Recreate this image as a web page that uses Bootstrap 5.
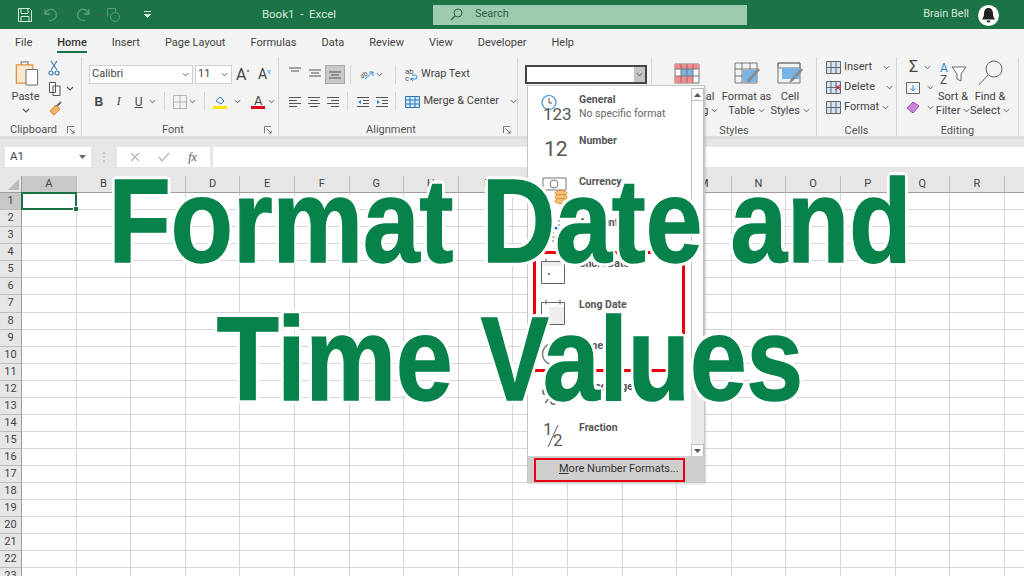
<!DOCTYPE html>
<html lang="en">
<head>
  <meta charset="UTF-8">
  <meta name="viewport" content="width=device-width, initial-scale=1.0">
  <link href="https://cdn.jsdelivr.net/npm/bootstrap@5.3.0/dist/css/bootstrap.min.css" rel="stylesheet">
  <title>Format Date and Time Values</title>
  <style>
    html, body { height: 100%; overflow: hidden; }
    body { font-family: Roboto, "Noto Sans", sans-serif; font-size: 11px; color: #444; background: #e6e6e6; position: relative; white-space: nowrap; }
    svg { display: block; flex: none; }
    svg.d-inline { display: inline; vertical-align: 1px; }
    .ml3 { margin-left: 3px; } .ml5 { margin-left: 5px; } .ml8 { margin-left: 8px; } .ml10 { margin-left: 10px; } .ml12 { margin-left: 12px; }

    .title-bar { height: 29px; background: #1b7346; color: #d5e8dc; }
    .qat { width: 232px; padding-left: 17px; }
    .doc-name { width: 134px; font-size: 11.5px; text-align: center; }
    .search-box { width: 314px; height: 20px; margin-left: 67px; background: #9dcbaf; color: #2f5f45; padding-left: 17px; gap: 12px; font-size: 11px; }
    .user-name { margin-left: auto; font-size: 11px; margin-right: 9px; }
    .avatar { margin-right: 25px; margin-top: 1px; }

    .tab-bar { height: 28px; background: #f3f3f3; padding-left: 15px; gap: 25px; font-size: 11px; line-height: 27px; }
    .tab-on { border-bottom: 2px solid #1b7346; height: 24px; color: #333; font-weight: 500; }

    .ribbon { height: 79px; background: #f3f3f3; }
    .rb-group { border-right: 1px solid #d4d4d4; height: 79px; }
    .rb-body { flex: 1 1 auto; padding-top: 3px; }
    .rb-label { height: 17px; padding-top: 4px; line-height: 15px; text-align: center; color: #555; font-size: 11px; }
    .launch { width: 14px; }
    .g-clip { width: 82px; }
    .g-font { width: 197px; }
    .g-align { width: 239px; }
    .g-num { width: 134px; }
    .g-style { width: 165px; }
    .g-cells { width: 80px; }
    .g-edit { width: 122px; }
    .g-clip .rb-body, .g-font .rb-body, .g-num .rb-body { padding-left: 7px; }
    .g-align .rb-body { padding-left: 6px; }
    .g-style .rb-body { padding-left: 3px; }
    .g-cells .rb-body, .g-edit .rb-body { padding-left: 9px; }
    .g-clip .rb-body { padding-top: 1px; }
    .g-cells .rb-body, .g-edit .small-stack { margin-top: -3px; }

    .tall { line-height: 14px; text-align: center; font-size: 11px; color: #444; }
    .tall svg { margin-bottom: 4px; }
    .tall svg.d-inline, .tall svg.mt-1 { margin-bottom: 0; }
    .g-clip .tall { margin-top: 1px; }
    .w37 { width: 37px; } .w63 { width: 63px; } .w49 { width: 49px; } .w38 { width: 38px; } .w36 { width: 36px; } .w29 { width: 29px; }
    .combo { height: 19px; background: #fff; border: 1px solid #d0d0d0; padding: 0 3px 0 2px; font-size: 11px; }
    .combo-font { width: 104px; }
    .combo-size { width: 37px; margin-left: 2px; }
    .grow-a { font-size: 16px; line-height: 19px; margin-left: 4px; width: 20px; }
    .grow-a sup { font-size: 7px; top: -.7em; }
    .shrink-a { font-size: 14px; margin-left: 2px; }
    .shrink-a sup { color: #2b88d8; }
    .rows-top { padding-top: 8px; }
    .tool-row { height: 19px; }
    .tool-row + .tool-row { margin-top: 8px; }
    .cell20 { width: 20px; height: 19px; }
    .cell10 { width: 10px; height: 19px; }
    .lines-top { padding-top: 2px; }
    .vsep { width: 1px; height: 19px; background: #d4d4d4; margin: 0 5px; }
    .vsep-wide { margin-left: 9px; }
    .vsep-mid { margin-left: 4px; }
    .pressed { background: #c9c9c9; border: 1px solid #a8a8a8; }
    .fmt-b { font: bold 12px "Liberation Sans", sans-serif; }
    .fmt-i { font: italic 12px "Liberation Serif", serif; }
    .fmt-u { font: 12px Roboto, sans-serif; text-decoration: underline; }
    .swatch { display: block; width: 14px; height: 3px; }
    .swatch-y { background: #ffe600; }
    .swatch-r { background: #e4001b; }
    .font-a { line-height: 11px; font-size: 13px; }
    .num-combo { width: 122px; height: 19px; background: #fff; border: 2px solid #444; }
    .num-arrow { width: 11px; background: #c4c4c4; margin-left: auto; }
    .small-row { height: 20px; gap: 3px; }
    .sigma { font-size: 16px; width: 15px; text-align: center; }
    .wrap-gap { gap: 3px; }

    .formula-bar { height: 40px; background: #e6e6e6; border-top: 3px solid #dcdcdc; padding: 8px 0 9px 5px; }
    .name-box { width: 86px; height: 20px; background: #fff; padding: 0 5px; font-size: 11.5px; }
    .grip { width: 26px; }
    .fx-box { width: 93px; height: 20px; background: #fff; margin-right: 3px; }
    .formula-input { flex: 1 1 auto; height: 20px; background: #fff; }
    .fx-mark { font: italic 12px "Liberation Serif", serif; color: #555; }

    .sheet { display: grid; grid-template-columns: 22px repeat(19, 54.6px); grid-auto-rows: 17.07px; background: #fff; }
    .sheet > div { border-right: 1px solid #d6d6d6; border-bottom: 1px solid #d6d6d6; }
    .sheet > .hd { background: #e6e6e6; border-color: #bdbdbd; text-align: center; color: #444; font-size: 11px; line-height: 16px; }
    .sheet > .hd-row { border-right-color: #9c9c9c; }
    .sheet > .hd-col { border-bottom-color: #9c9c9c; }
    .sheet > .hd-on { background: #c8c8c8; }
    .sheet > .a1 { position: relative; border: 2px solid #1b7346; margin: -1px 0 0 -1px; }
    .a1::after { content: ""; position: absolute; right: -4px; bottom: -4px; width: 6px; height: 6px; background: #1b7346; border: 1px solid #fff; }
    .corner { display: flex; align-items: flex-end; justify-content: flex-end; padding: 0 2px 2px 0; }

    .fmt-menu { position: absolute; left: 527px; top: 85px; width: 178px; height: 398px; background: #fff; border: 1px solid #c6c6c6; border-radius: 0; padding: 0; box-shadow: 1px 1px 2px rgba(0,0,0,.15); margin: 0; z-index: 1; font-size: 11px; color: #444; }
    .fmt-item { height: 41px; padding: 5px 0 0 7px; gap: 8px; }
    .fmt-text { padding-top: 2px; line-height: 14px; font-size: 10.5px; color: #666; }
    .fmt-text b { display: block; color: #555; }
    .fmt-scroll { position: absolute; left: 163px; top: 2px; width: 13px; height: 369px; background: #e9e9e9; }
    .scroll-btn { width: 13px; height: 13px; border: 1px solid #bdbdbd; background: #fff; }
    .scroll-thumb { height: 276px; background: #fff; border: 1px solid #bdbdbd; border-top: 0; }
    .scroll-track { height: 67px; }
    .fmt-foot { position: absolute; left: 0; right: 0; bottom: 0; height: 26px; background: #cfcfcf; padding-left: 31px; line-height: 25px; color: #333; }
    .red-foot { position: absolute; left: 534px; top: 458px; width: 151px; height: 24px; border: 2px solid #e8000f; z-index: 2; }
    .red-range { position: absolute; left: 533px; top: 251px; width: 152px; height: 121px; border: 3px solid #e8000f; z-index: 2; }

    .headline { position: absolute; left: 0; top: 152px; width: 1020px; z-index: 3; text-align: center; font: bold 119px/138px "Liberation Sans", sans-serif; color: #07824a; -webkit-text-stroke: 1.5px #07824a; text-shadow: 4px 0 #fff, -4px 0 #fff, 0 4px #fff, 0 -4px #fff, 3px 3px #fff, -3px 3px #fff, 3px -3px #fff, -3px -3px #fff; transform: scaleX(.855); transform-origin: 50% 50%; }
  </style>
</head>
<body>
  <svg width="0" height="0" class="position-absolute">
    <symbol id="chev" viewBox="0 0 8 5"><path d="M1 1l3 3 3-3" fill="none" stroke="#555" stroke-width="1.1"/></symbol>
    <symbol id="launch" viewBox="0 0 9 9"><path d="M.5 8V.5H8M3 3l5 5M8 5v3H5" fill="none" stroke="#666"/></symbol>
    <symbol id="al-l" viewBox="0 0 14 12"><path d="M1 1.500h12M1 4.500h8M1 7.500h12M1 10.500h8" stroke="#555"/></symbol>
    <symbol id="al-c" viewBox="0 0 14 12"><path d="M1 1.500h12M3 4.500h8M1 7.500h12M3 10.500h8" stroke="#555"/></symbol>
    <symbol id="al-r" viewBox="0 0 14 12"><path d="M1 1.500h12M5 4.500h8M1 7.500h12M5 10.500h8" stroke="#555"/></symbol>
  </svg>

  <div class="title-bar d-flex align-items-center">
    <div class="qat d-flex align-items-center">
      <svg width="16" height="16" viewBox="0 0 16 16" fill="none" stroke="#d5e8dc"><path d="M1.500 1.500h11l2 2v11h-13zM4 1.500v5h7v-5M4 14.500v-5h8v5"/></svg>
      <svg class="ml10" width="15" height="15" viewBox="0 0 15 15" fill="none" stroke="#5c9d7b" stroke-width="1.300"><path d="M2 2v5h5M2.500 7A5.500 5.500 0 1 1 6 13"/></svg>
      <svg class="ml3" width="7" height="5"><use href="#chev"/></svg>
      <svg class="ml8" width="15" height="15" viewBox="0 0 15 15" fill="none" stroke="#5c9d7b" stroke-width="1.300"><path d="M13 2v5H8M12.500 7A5.500 5.500 0 1 0 9 13"/></svg>
      <svg class="ml3" width="7" height="5"><use href="#chev"/></svg>
      <svg class="ml5" width="15" height="15" viewBox="0 0 15 15" fill="none" stroke="#5c9d7b"><path d="M1.500 9.500v-8h8v3"/><circle cx="9" cy="10" r="4.500"/></svg>
      <svg class="ml3" width="7" height="5"><use href="#chev"/></svg>
      <svg class="ml12" width="9" height="9" viewBox="0 0 9 9" fill="none" stroke="#d5e8dc"><path d="M1 1.500h7"/><path d="M1 4l3.500 3.500L8 4" fill="#d5e8dc"/></svg>
    </div>
    <div class="doc-name">Book1&nbsp; - &nbsp;Excel</div>
    <div class="search-box d-flex align-items-center">
      <svg width="13" height="13" viewBox="0 0 13 13" fill="none" stroke="#2f5f45"><circle cx="8" cy="5" r="4"/><path d="M5 8l-4 4" stroke-width="1.300"/></svg>
      <span>Search</span>
    </div>
    <div class="user-name">Brain Bell</div>
    <svg class="avatar" width="21" height="21" viewBox="0 0 21 21"><circle cx="10.500" cy="10.500" r="10.500" fill="#fff"/><path d="M10.500 3c-3 0-4.500 2.500-4.500 5.500 0 3-1 4.500-2 6h13c-1-1.500-2-3-2-6C15 5.500 13.500 3 10.500 3zM8.500 15.500a2 2 0 0 0 4 0z" fill="#222"/></svg>
  </div>

  <div class="tab-bar d-flex">
    <span>File</span><span class="tab-on">Home</span><span>Insert</span><span>Page Layout</span><span>Formulas</span><span>Data</span><span>Review</span><span>View</span><span>Developer</span><span>Help</span>
  </div>

  <div class="ribbon d-flex">
    <section class="rb-group g-clip d-flex flex-column">
      <div class="rb-body d-flex">
        <div class="tall w37 d-flex flex-column align-items-center">
          <svg width="26" height="27" viewBox="0 0 26 28" fill="none"><path d="M3 6h17v19H3z" fill="#fbe8d0" stroke="#e2913c" stroke-width="1.300"/><path d="M8 6V3h7v3" stroke="#8a8a8a" stroke-width="1.300"/><path d="M13 11h12v16H13z" fill="#fff" stroke="#666"/></svg>
          Paste
          <svg class="mt-1" width="8" height="5"><use href="#chev"/></svg>
        </div>
        <div class="d-flex flex-column ms-1">
          <div class="small-row d-flex align-items-center"><svg width="12" height="16" viewBox="0 0 12 16" fill="none" stroke="#3f7fb8" stroke-width="1.200"><path d="M3 1l6 9M9 1L3 10"/><circle cx="3" cy="13" r="2"/><circle cx="9" cy="13" r="2"/></svg></div>
          <div class="small-row d-flex align-items-center"><svg width="15" height="15" viewBox="0 0 15 15" fill="none" stroke="#555"><path d="M1.500 1.500h6v10h-6zM5 5h7v9.500H5z" fill="#fff"/></svg><svg width="8" height="5"><use href="#chev"/></svg></div>
          <div class="small-row d-flex align-items-center"><svg width="15" height="15" viewBox="0 0 15 15" fill="none"><path d="M2 10l6-6 4 4-6 6z" fill="#f2b36a" stroke="#d98425"/><path d="M9 5l4-4" stroke="#666" stroke-width="2"/></svg></div>
        </div>
      </div>
      <div class="rb-label d-flex align-items-center"><span class="flex-grow-1">Clipboard</span><span class="launch"><svg width="8" height="8"><use href="#launch"/></svg></span></div>
    </section>

    <section class="rb-group g-font d-flex flex-column">
      <div class="rb-body rows-top">
        <div class="tool-row d-flex align-items-center">
          <div class="combo combo-font d-flex align-items-center justify-content-between"><span>Calibri</span><svg width="7" height="5"><use href="#chev"/></svg></div>
          <div class="combo combo-size d-flex align-items-center justify-content-between"><span>11</span><svg width="7" height="5"><use href="#chev"/></svg></div>
          <span class="grow-a">A<sup>^</sup></span>
          <span class="grow-a shrink-a">A<sup>v</sup></span>
        </div>
        <div class="tool-row d-flex align-items-center">
          <div class="cell20 d-flex align-items-center justify-content-center fmt-b">B</div>
          <div class="cell20 d-flex align-items-center justify-content-center fmt-i">I</div>
          <div class="cell20 d-flex align-items-center justify-content-center fmt-u">U</div>
          <div class="cell10 d-flex align-items-center"><svg width="7" height="5"><use href="#chev"/></svg></div>
          <div class="vsep"></div>
          <div class="cell20 d-flex align-items-center justify-content-center"><svg width="14" height="14" viewBox="0 0 14 14" fill="none" stroke="#777" stroke-dasharray="1 1"><path d="M.5.500h13v13H.500zM7 .5v13M.5 7h13"/></svg></div>
          <div class="cell10 d-flex align-items-center"><svg width="7" height="5"><use href="#chev"/></svg></div>
          <div class="vsep"></div>
          <div class="cell20 d-flex flex-column align-items-center justify-content-center"><svg width="13" height="11" viewBox="0 0 13 11" fill="none" stroke="#3f7fb8"><path d="M2 6l4-4 4 4-3 3z"/></svg><span class="swatch swatch-y"></span></div>
          <div class="cell10 ms-1 d-flex align-items-center"><svg width="7" height="5"><use href="#chev"/></svg></div>
          <div class="cell20 ms-1 font-a d-flex flex-column align-items-center justify-content-center">A<span class="swatch swatch-r"></span></div>
          <div class="cell10 d-flex align-items-center"><svg width="7" height="5"><use href="#chev"/></svg></div>
        </div>
      </div>
      <div class="rb-label d-flex align-items-center"><span class="flex-grow-1">Font</span><span class="launch"><svg width="8" height="8"><use href="#launch"/></svg></span></div>
    </section>

    <section class="rb-group g-align d-flex flex-column">
      <div class="rb-body rows-top">
        <div class="tool-row d-flex align-items-center">
          <div class="cell20 lines-top d-flex align-items-start justify-content-center"><svg width="14" height="10" viewBox="0 0 14 10"><path d="M1 1h12M3 4h8" stroke="#555"/></svg></div>
          <div class="cell20 lines-top d-flex align-items-start justify-content-center"><svg width="14" height="10" viewBox="0 0 14 10"><path d="M1 3h12M3 6h8M1 9h12" stroke="#555"/></svg></div>
          <div class="cell20 pressed d-flex align-items-end justify-content-center pb-1"><svg width="14" height="9" viewBox="0 0 14 9"><path d="M1 2h12M3 5h8M1 8h12" stroke="#555"/></svg></div>
          <div class="vsep"></div>
          <div class="cell20 d-flex align-items-center justify-content-center"><svg width="18" height="16" viewBox="0 0 18 16" fill="none"><text x="3" y="10" font-size="7" fill="#555" font-family="Roboto" transform="rotate(-30 7 8)">ab</text><path d="M8 12l8-7M12 5h4v4" stroke="#2b88d8"/></svg></div>
          <div class="cell10 d-flex align-items-center"><svg width="7" height="5"><use href="#chev"/></svg></div>
          <div class="vsep vsep-wide"></div>
          <div class="d-flex align-items-center ms-1 wrap-gap"><svg width="13" height="15" viewBox="0 0 13 15" fill="none"><text x="0" y="7" font-size="8" fill="#555" font-family="Roboto">ab</text><text x="0" y="14" font-size="8" fill="#555" font-family="Roboto">c</text><path d="M5 12h5a2 2 0 0 0 0-4H7M8 11l-2 1 2 2" stroke="#2b88d8"/></svg><span>Wrap Text</span></div>
        </div>
        <div class="tool-row d-flex align-items-center">
          <div class="cell20 d-flex align-items-center justify-content-center"><svg width="14" height="12"><use href="#al-l"/></svg></div>
          <div class="cell20 d-flex align-items-center justify-content-center"><svg width="14" height="12"><use href="#al-c"/></svg></div>
          <div class="cell20 d-flex align-items-center justify-content-center"><svg width="14" height="12"><use href="#al-r"/></svg></div>
          <div class="vsep"></div>
          <div class="cell20 d-flex align-items-center justify-content-center"><svg width="14" height="12" viewBox="0 0 14 12"><path d="M1 1.500h12M7 4.500h6M7 7.500h6M1 10.500h12" stroke="#555"/><path d="M5 4L2 6l3 2z" fill="#2b88d8"/></svg></div>
          <div class="cell20 d-flex align-items-center justify-content-center"><svg width="14" height="12" viewBox="0 0 14 12"><path d="M1 1.500h12M7 4.500h6M7 7.500h6M1 10.500h12" stroke="#555"/><path d="M2 4l3 2-3 2z" fill="#2b88d8"/></svg></div>
          <div class="vsep vsep-mid"></div>
          <div class="d-flex align-items-center ms-1 wrap-gap"><svg width="15" height="14" viewBox="0 0 15 14" fill="#d5e8f7" stroke="#2b78b8"><path d="M.5 1.500h14v11H.5zM.5 5h14M.5 9h14M5 1.500v11M10 1.500v11"/></svg><span>Merge &amp; Center</span><svg class="ms-2" width="7" height="5"><use href="#chev"/></svg></div>
        </div>
      </div>
      <div class="rb-label d-flex align-items-center"><span class="flex-grow-1">Alignment</span><span class="launch"><svg width="8" height="8"><use href="#launch"/></svg></span></div>
    </section>

    <section class="rb-group g-num d-flex flex-column">
      <div class="rb-body rows-top">
        <div class="num-combo d-flex"><span class="num-arrow d-flex align-items-center justify-content-center"><svg width="7" height="5"><use href="#chev"/></svg></span></div>
      </div>
      <div class="rb-label">Number</div>
    </section>

    <section class="rb-group g-style d-flex flex-column">
      <div class="rb-body d-flex">
        <div class="tall w63 d-flex flex-column align-items-center">
          <svg width="26" height="26" viewBox="0 0 26 26" fill="none" stroke="#777"><path d="M1 4h24v19H1z" fill="#fff"/><path d="M1 4h24v5H1zM1 16h18v7H1z" fill="#f48a8a" stroke="none"/><path d="M7 9h12v7H7z" fill="#79b4e6" stroke="none"/><path d="M1 9h24M1 16h24M7 4v19M13 4v19M19 4v19"/></svg>
          <div>Conditional<br>Formatting <svg class="d-inline" width="7" height="5"><use href="#chev"/></svg></div>
        </div>
        <div class="tall w49 ms-1 d-flex flex-column align-items-center">
          <svg width="26" height="26" viewBox="0 0 26 26" fill="none" stroke="#777"><path d="M1 3h22v20H1zM1 9h22M1 16h22M8 3v20M16 3v20"/><path d="M9 10h14v12H9z" fill="#79b4e6" stroke="none"/><path d="M24 8L14 19l-2 4 4-2L26 10z" fill="#8a8a8a" stroke="none"/></svg>
          <div>Format as<br>Table <svg class="d-inline" width="7" height="5"><use href="#chev"/></svg></div>
        </div>
        <div class="tall w38 d-flex flex-column align-items-center">
          <svg width="26" height="26" viewBox="0 0 26 26" fill="none" stroke="#777"><path d="M1 3h22v20H1z"/><path d="M1 3h22v5H1z" stroke="#777"/><path d="M5 8h18v11H5z" fill="#79b4e6" stroke="none"/><path d="M24 8L14 19l-2 4 4-2L26 10z" fill="#8a8a8a" stroke="none"/></svg>
          <div>Cell<br>Styles <svg class="d-inline" width="7" height="5"><use href="#chev"/></svg></div>
        </div>
      </div>
      <div class="rb-label">Styles</div>
    </section>

    <section class="rb-group g-cells d-flex flex-column">
      <div class="rb-body">
        <div class="small-row d-flex align-items-center"><svg width="15" height="13" viewBox="0 0 15 13" fill="#cfe4f5" stroke="#666"><path d="M.5.500h14v12H.5zM5 .5v12M10 .5v12M.5 6.500h14"/></svg><span>Insert</span><svg class="ms-2" width="7" height="5"><use href="#chev"/></svg></div>
        <div class="small-row d-flex align-items-center"><svg width="15" height="13" viewBox="0 0 15 13" fill="#cfe4f5" stroke="#666"><path d="M.5.500h14v12H.5zM5 .5v12M10 .5v12M.5 6.500h14"/><path d="M10 4l4 5M14 4l-4 5" stroke="#e4001b"/></svg><span>Delete</span><svg class="ms-2" width="7" height="5"><use href="#chev"/></svg></div>
        <div class="small-row d-flex align-items-center"><svg width="15" height="13" viewBox="0 0 15 13" fill="#cfe4f5" stroke="#666"><path d="M.5.500h14v12H.5zM5 .5v12M10 .5v12M.5 6.500h14"/></svg><span>Format</span><svg width="7" height="5"><use href="#chev"/></svg></div>
      </div>
      <div class="rb-label">Cells</div>
    </section>

    <section class="rb-group g-edit d-flex flex-column">
      <div class="rb-body d-flex">
        <div class="small-stack w29">
          <div class="small-row d-flex align-items-center"><span class="sigma">Σ</span><svg width="7" height="5"><use href="#chev"/></svg></div>
          <div class="small-row d-flex align-items-center"><svg width="14" height="13" viewBox="0 0 14 13" fill="none" stroke="#666"><path d="M.5 1.500h13v11H.5z"/><path d="M7 4v6M4.500 7.500L7 10l2.500-2.500" stroke="#2b88d8"/></svg><svg class="ms-1" width="7" height="5"><use href="#chev"/></svg></div>
          <div class="small-row d-flex align-items-center"><svg width="14" height="13" viewBox="0 0 14 13" fill="#c987dc" stroke="#9b4fb3"><path d="M1 7l6-6 6 4-6 7z"/></svg><svg class="ms-1" width="7" height="5"><use href="#chev"/></svg></div>
        </div>
        <div class="tall w36 d-flex flex-column align-items-center">
          <svg width="27" height="26" viewBox="0 0 27 26" fill="none"><text x="0" y="12" font-size="12" fill="#2b88d8" font-family="Roboto">A</text><text x="0" y="24" font-size="12" fill="#555" font-family="Roboto">Z</text><path d="M12 7h14l-5 7v7l-4-2v-5z" stroke="#666" fill="#fff"/></svg>
          <div>Sort &amp;<br>Filter <svg class="d-inline" width="7" height="5"><use href="#chev"/></svg></div>
        </div>
        <div class="tall w38 d-flex flex-column align-items-center">
          <svg width="27" height="26" viewBox="0 0 27 26" fill="none" stroke="#666"><circle cx="17" cy="9" r="8"/><path d="M11 15L2 25"/></svg>
          <div>Find &amp;<br>Select <svg class="d-inline" width="7" height="5"><use href="#chev"/></svg></div>
        </div>
      </div>
      <div class="rb-label">Editing</div>
    </section>
  </div>

  <div class="formula-bar d-flex">
    <div class="name-box d-flex align-items-center justify-content-between"><span>A1</span><svg width="7" height="4" viewBox="0 0 7 4"><path d="M0 0h7L3.500 4z" fill="#666"/></svg></div>
    <div class="grip d-flex align-items-center justify-content-center"><svg width="2" height="10"><path d="M1 0v2M1 4v2M1 8v2" stroke="#aaa"/></svg></div>
    <div class="fx-box d-flex align-items-center justify-content-around px-1">
      <svg width="10" height="10" viewBox="0 0 10 10"><path d="M1 1l8 8M9 1L1 9" stroke="#b5b5b5" stroke-width="1.300"/></svg>
      <svg width="12" height="10" viewBox="0 0 12 10" fill="none"><path d="M1 5l3 4 7-8" stroke="#b5b5b5" stroke-width="1.300"/></svg>
      <span class="fx-mark">fx</span>
    </div>
    <div class="formula-input"></div>
  </div>

  <div class="sheet" id="sheet"></div>

  <div class="fmt-menu dropdown-menu show">
    <div class="fmt-item d-flex"><svg width="36" height="36" viewBox="0 0 36 36"><circle cx="14" cy="11.500" r="7" fill="#fff" stroke="#3c8fd8" stroke-width="1.200"/><path d="M14 7v5h3" fill="none" stroke="#555"/><text x="8" y="29" font-size="17" fill="#555" font-family="Roboto">123</text></svg><div class="fmt-text"><b>General</b>No specific format</div></div>
    <div class="fmt-item d-flex"><svg width="36" height="36" viewBox="0 0 36 36"><text x="9" y="24" font-size="21" fill="#555" font-family="Roboto">12</text></svg><div class="fmt-text"><b>Number</b></div></div>
    <div class="fmt-item d-flex"><svg width="36" height="36" viewBox="0 0 36 36" fill="none"><path d="M8 5h23v12H8z" stroke="#777"/><circle cx="19" cy="11" r="4" stroke="#777"/><ellipse cx="26" cy="20" rx="6" ry="2.500" fill="#f6c37c" stroke="#e08a2c"/><ellipse cx="26" cy="24" rx="6" ry="2.500" fill="#f6c37c" stroke="#e08a2c"/><ellipse cx="26" cy="28" rx="6" ry="2.500" fill="#f6c37c" stroke="#e08a2c"/></svg><div class="fmt-text"><b>Currency</b></div></div>
    <div class="fmt-item d-flex"><svg width="36" height="36" viewBox="0 0 36 36" fill="none"><path d="M18 2v28M24 2v28" stroke="#777" stroke-dasharray="2 2"/><circle cx="21" cy="14" r="1.500" fill="#2b78b8"/><circle cx="23" cy="24" r="3" stroke="#e08a2c"/></svg><div class="fmt-text"><b>Accounting</b></div></div>
    <div class="fmt-item d-flex"><svg width="36" height="36" viewBox="0 0 36 36" fill="none" stroke="#666"><path d="M6.500 6.500h23v22h-23zM11 3.500v5M25 3.500v5"/><path d="M7 7h22v4H7z" fill="#eee" stroke="none"/><circle cx="14" cy="19" r="1" fill="#555" stroke="none"/></svg><div class="fmt-text"><b>Short Date</b></div></div>
    <div class="fmt-item d-flex"><svg width="36" height="36" viewBox="0 0 36 36" fill="none" stroke="#666"><path d="M6.500 6.500h23v22h-23zM11 3.500v5M25 3.500v5"/><path d="M14 11h15v17H14z" fill="#eee" stroke="none"/></svg><div class="fmt-text"><b>Long Date</b></div></div>
    <div class="fmt-item d-flex"><svg width="36" height="36" viewBox="0 0 36 36" fill="none" stroke="#777" stroke-width="1.300"><circle cx="18" cy="17" r="10.500"/><path d="M18 10v7h5"/></svg><div class="fmt-text"><b>Time</b></div></div>
    <div class="fmt-item d-flex"><svg width="36" height="36" viewBox="0 0 36 36"><text x="6" y="27" font-size="23" fill="#666" font-family="Roboto">%</text></svg><div class="fmt-text"><b>Percentage</b></div></div>
    <div class="fmt-item d-flex"><svg width="36" height="36" viewBox="0 0 36 36"><text x="8" y="16" font-size="17" fill="#555" font-family="Roboto">1</text><path d="M13 28L23 6" stroke="#555"/><text x="18" y="27" font-size="17" fill="#555" font-family="Roboto">2</text></svg><div class="fmt-text"><b>Fraction</b></div></div>
    <div class="fmt-scroll">
      <div class="scroll-btn d-flex align-items-center justify-content-center"><svg width="7" height="4" viewBox="0 0 7 4"><path d="M0 4h7L3.500 0z" fill="#555"/></svg></div>
      <div class="scroll-thumb"></div>
      <div class="scroll-track"></div>
      <div class="scroll-btn d-flex align-items-center justify-content-center"><svg width="7" height="4" viewBox="0 0 7 4"><path d="M0 0h7L3.500 4z" fill="#555"/></svg></div>
    </div>
    <div class="fmt-foot"><u>M</u>ore Number Formats...</div>
  </div>
  <div class="red-range"></div>
  <div class="red-foot"></div>

  <div class="headline">Format Date and<br>Time Values</div>

  <script src="https://cdn.jsdelivr.net/npm/bootstrap@5.3.0/dist/js/bootstrap.bundle.min.js"></script>
  <script>
    // build the worksheet grid
    const sheet = document.getElementById('sheet');
    const letters = 'ABCDEFGHIJKLMNOPQRS';
    let html = '<div class="hd hd-col hd-row corner"><svg width="11" height="11"><path d="M11 0v11H0z" fill="#bbb"/></svg></div>';
    for (const c of letters) {
      html += `<div class="hd hd-col${c === 'A' ? ' hd-on' : ''}">${c === 'S' ? '' : c}</div>`;
    }
    for (let r = 1; r <= 23; r++) {
      html += `<div class="hd hd-row${r === 1 ? ' hd-on' : ''}">${r}</div>`;
      for (const c of letters) {
        html += `<div${r === 1 && c === 'A' ? ' class="a1"' : ''}></div>`;
      }
    }
    sheet.innerHTML = html;
  </script>
</body>
</html>
